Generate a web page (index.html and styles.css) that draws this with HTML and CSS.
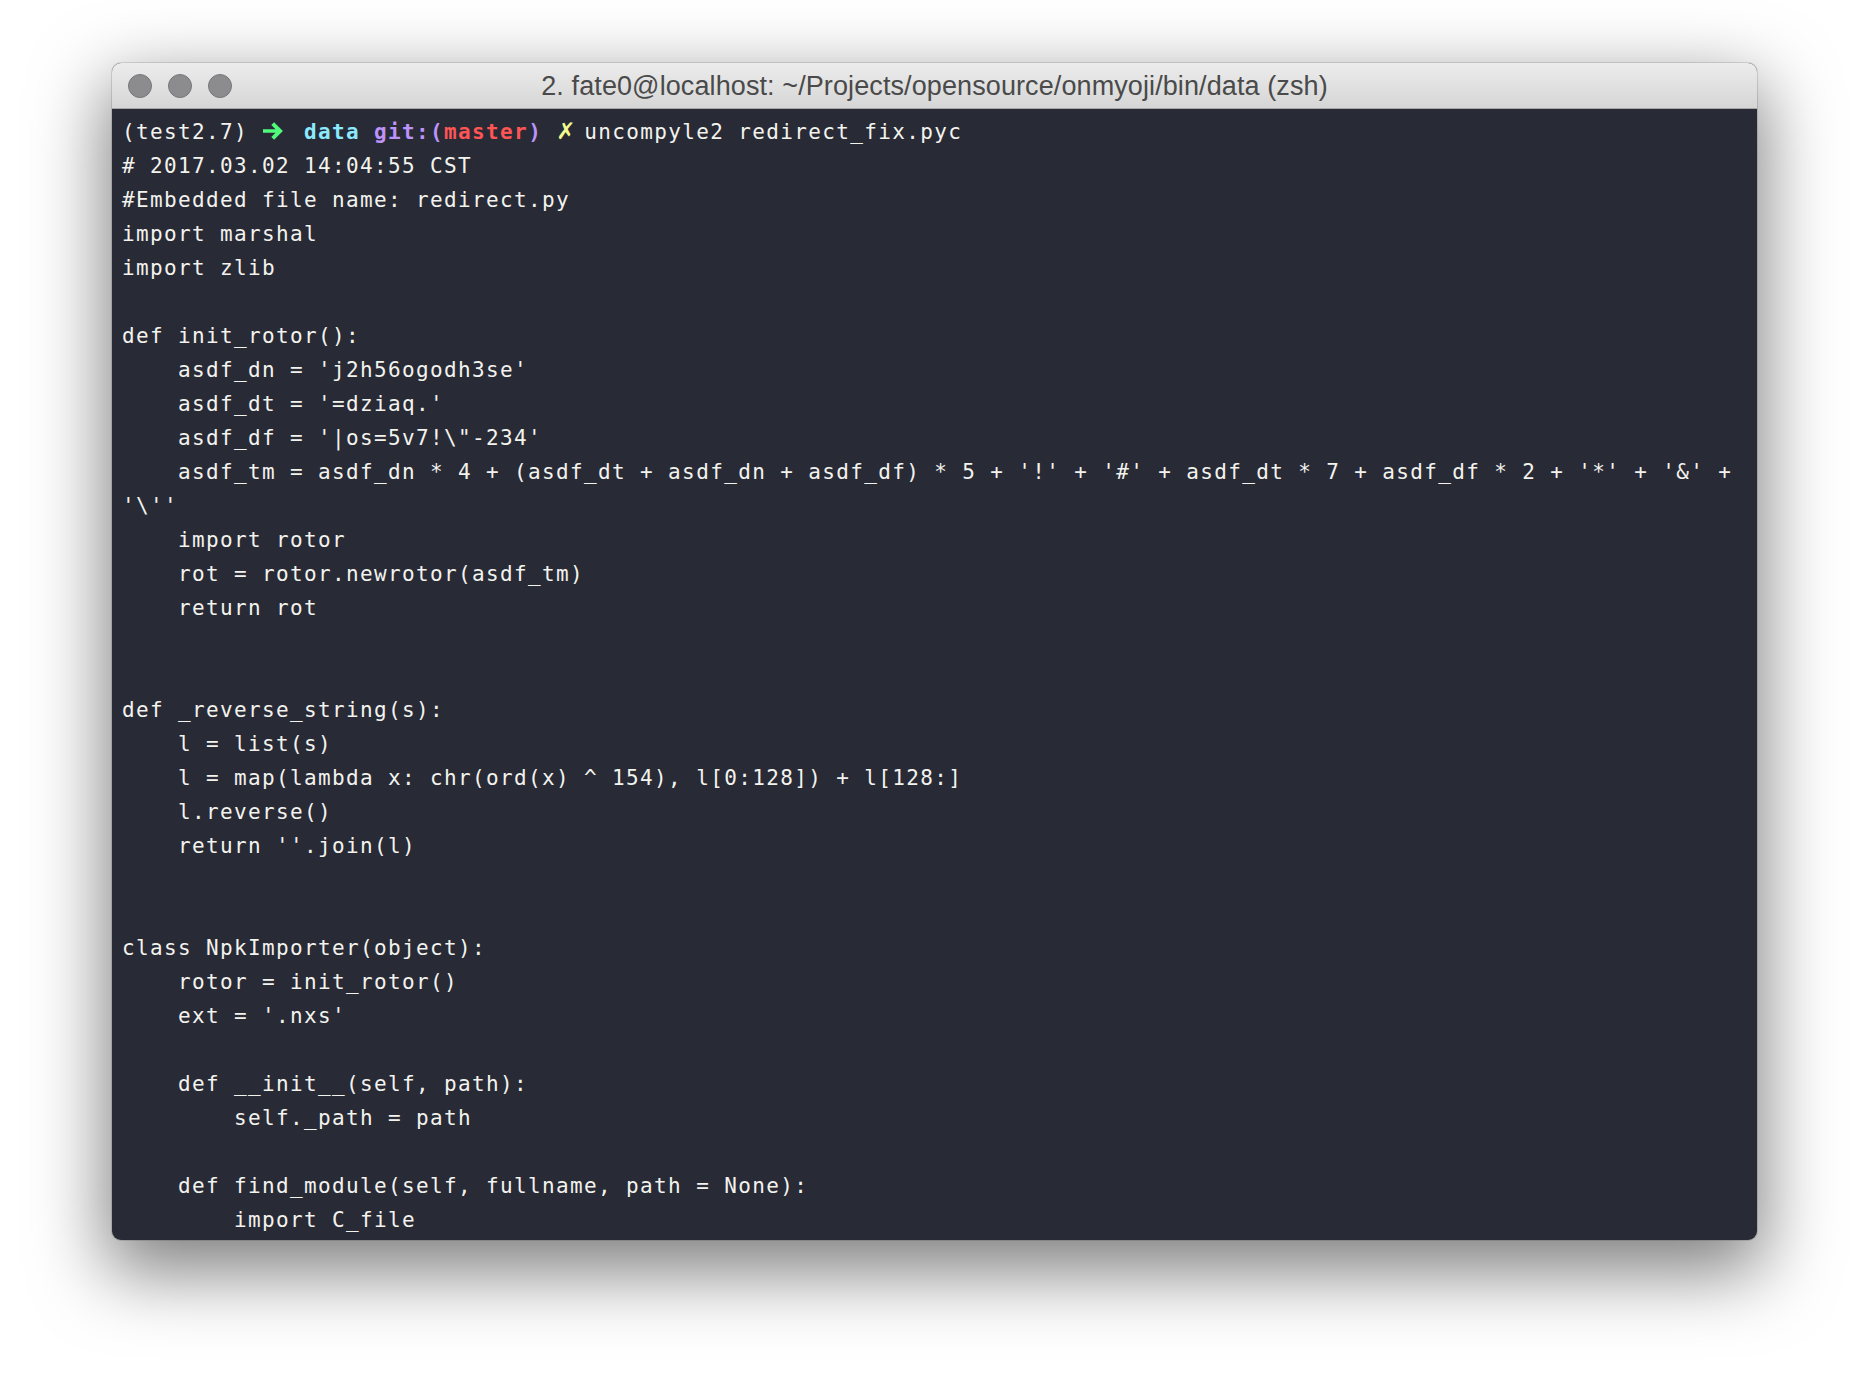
FILE: index.html
```html
<!DOCTYPE html>
<html>
<head>
<meta charset="utf-8">
<link rel="stylesheet" href="styles.css">
</head>
<body>
<div class="stage">
  <div class="window">
    <div class="titlebar">
      <div class="lights">
        <span class="light"></span>
        <span class="light"></span>
        <span class="light"></span>
      </div>
      <div class="title">2. fate0@localhost: ~/Projects/opensource/onmyoji/bin/data (zsh)</div>
    </div>
    <div class="term">
<pre class="code">(test2.7) <span class="glyph arrow"><svg width="22" height="18" viewBox="0 0 22 18"><path d="M1 7.2h12.5l-4.2-4.2 2.8-2.8 8.8 8.8-8.8 8.8-2.8-2.8 4.2-4.2h-12.5z" fill="#50fa7b"/></svg></span>  <span class="dir">data</span> <span class="git">git:(</span><span class="branch">master</span><span class="git">)</span> <span class="glyph dirty">✗</span> uncompyle2 redirect_fix.pyc
# 2017.03.02 14:04:55 CST
#Embedded file name: redirect.py
import marshal
import zlib

def init_rotor():
    asdf_dn = 'j2h56ogodh3se'
    asdf_dt = '=dziaq.'
    asdf_df = '|os=5v7!\"-234'
    asdf_tm = asdf_dn * 4 + (asdf_dt + asdf_dn + asdf_df) * 5 + '!' + '#' + asdf_dt * 7 + asdf_df * 2 + '*' + '&' +
'\''
    import rotor
    rot = rotor.newrotor(asdf_tm)
    return rot


def _reverse_string(s):
    l = list(s)
    l = map(lambda x: chr(ord(x) ^ 154), l[0:128]) + l[128:]
    l.reverse()
    return ''.join(l)


class NpkImporter(object):
    rotor = init_rotor()
    ext = '.nxs'

    def __init__(self, path):
        self._path = path

    def find_module(self, fullname, path = None):
        import C_file
</pre>
    </div>
  </div>
</div>
</body>
</html>
```
FILE: styles.css
```css
html, body {
  margin: 0;
  padding: 0;
  background: #ffffff;
}
.stage {
  padding: 63px 0 0 112px;
  min-height: 1400px;
  box-sizing: border-box;
}
.window {
  width: 1645px;
  height: 1177px;
  border-radius: 9px;
  overflow: hidden;
  box-shadow: 0 26px 72px 6px rgba(0, 0, 0, 0.5), 0 0 0 1px rgba(0, 0, 0, 0.12);
  display: flex;
  flex-direction: column;
  background: #282a36;
}
.titlebar {
  height: 45px;
  flex: 0 0 45px;
  border-bottom: 1px solid #a8a8a8;
  background: linear-gradient(#ececec, #d6d6d6);
  display: flex;
  align-items: center;
  position: relative;
}
.lights {
  display: flex;
  gap: 16px;
  padding-left: 16px;
}
.light {
  width: 22px;
  height: 22px;
  border-radius: 50%;
  background: #8c8c8f;
  border: 1px solid #77777a;
}
.title {
  position: absolute;
  left: 0;
  right: 0;
  top: 1px;
  bottom: 0;
  display: flex;
  align-items: center;
  justify-content: center;
  font-family: "Liberation Sans", Arial, sans-serif;
  font-size: 27px;
  letter-spacing: 0.1px;
  color: #4a4a4a;
}
.term {
  flex: 1;
  padding: 5px 0 0 10px;
  overflow: hidden;
}
.code {
  margin: 0;
  font-family: "DejaVu Sans Mono", monospace;
  font-size: 21px;
  letter-spacing: 1.36px;
  line-height: 34px;
  color: #f3f3ee;
  white-space: pre;
}
.glyph {
  display: inline-block;
  width: 14px;
  text-align: center;
  letter-spacing: 0;
}
.arrow {
  position: relative;
  height: 18px;
}
.arrow svg {
  position: absolute;
  left: 0;
  top: 1px;
}
.dirty {
  color: #f1fa8c;
  font-family: "DejaVu Sans", sans-serif;
  font-style: italic;
  font-size: 23px;
}
.dir { color: #8be9fd; font-weight: bold; }
.git { color: #bd93f9; font-weight: bold; }
.branch { color: #ff5555; font-weight: bold; }
```
